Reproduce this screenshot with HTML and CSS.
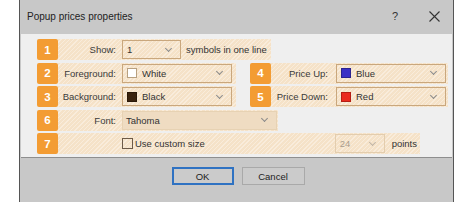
FILE: index.html
```html
<!DOCTYPE html>
<html lang="en">
<head>
  <meta charset="UTF-8">
  <title>Popup prices properties</title>
  <link rel="stylesheet" href="styles.css">
</head>
<body>
  <!-- Dialog Window -->
  <div class="window">
    <!-- Title Bar -->
    <div class="titlebar">
      <span class="title">Popup prices properties</span>
      <span class="help">?</span>
      <span class="close">
        <svg width="11" height="11" viewBox="0 0 11 11">
          <path d="M0.5 0.5 L10.5 10.5 M10.5 0.5 L0.5 10.5" stroke="#333" stroke-width="1.1" fill="none"/>
        </svg>
      </span>
    </div>

    <!-- Settings Panel -->
    <div class="panel">
      <div class="row">
        <div class="badge">1</div>
        <div class="strip">
          <span class="label">Show:</span>
          <div class="select show-select"><span class="value">1</span><span class="arrow"></span></div>
          <span class="note">symbols in one line</span>
        </div>
      </div>

      <div class="row">
        <div class="badge">2</div>
        <div class="strip">
          <span class="label">Foreground:</span>
          <div class="select color-select"><span class="swatch white"></span><span class="value">White</span><span class="arrow"></span></div>
        </div>
        <div class="badge right">4</div>
        <div class="strip right-strip">
          <span class="label">Price Up:</span>
          <div class="select color-select"><span class="swatch blue"></span><span class="value">Blue</span><span class="arrow"></span></div>
        </div>
      </div>

      <div class="row">
        <div class="badge">3</div>
        <div class="strip">
          <span class="label">Background:</span>
          <div class="select color-select"><span class="swatch black"></span><span class="value">Black</span><span class="arrow"></span></div>
        </div>
        <div class="badge right">5</div>
        <div class="strip right-strip">
          <span class="label">Price Down:</span>
          <div class="select color-select"><span class="swatch red"></span><span class="value">Red</span><span class="arrow"></span></div>
        </div>
      </div>

      <div class="row">
        <div class="badge">6</div>
        <div class="strip font-strip">
          <span class="label">Font:</span>
          <div class="select font-select"><span class="value">Tahoma</span><span class="arrow"></span></div>
        </div>
      </div>

      <div class="row">
        <div class="badge">7</div>
        <div class="strip size-strip">
          <span class="label"></span>
          <span class="checkbox"></span>
          <span class="check-text">Use custom size</span>
          <span class="spacer"></span>
          <div class="select size-select"><span class="value">24</span><span class="arrow"></span></div>
          <span class="note">points</span>
        </div>
      </div>
    </div>

    <!-- Buttons -->
    <div class="footer">
      <button class="btn ok">OK</button>
      <button class="btn">Cancel</button>
    </div>
  </div>
</body>
</html>
```

FILE: styles.css
```css
/* General Reset */
* {
  margin: 0;
  padding: 0;
  box-sizing: border-box;
  font-family: 'Liberation Sans', Arial, sans-serif;
}

body {
  background: #fff;
  color: #333;
  font-size: 9.5px;
}

/* Window */
.window {
  margin-left: 19px;
  width: 435px;
  height: 202px;
  background: #c8c8c8;
  border-left: 1px solid #555;
  border-right: 1px solid #555;
  padding: 0 1px;
}

/* Title Bar */
.titlebar {
  height: 34px;
  display: flex;
  align-items: center;
  padding-left: 6px;
  padding-bottom: 2px;
}

.title {
  font-size: 10px;
  color: #222;
  flex: 1;
}

.help {
  font-size: 11px;
  color: #333;
  width: 10px;
  margin-right: 27px;
}

.close {
  display: flex;
  margin-right: 12px;
}

/* Settings Panel */
.panel {
  background: #efefef;
  height: 124px;
  padding: 5px 0 0 16px;
  border-bottom: 1px solid #8e8e8e;
}

.row {
  display: flex;
  height: 21px;
  margin-bottom: 2.5px;
}

.badge {
  width: 21px;
  background: #f39c33;
  color: #fff;
  font-weight: bold;
  font-size: 11.5px;
  border-radius: 2px;
  display: flex;
  align-items: center;
  justify-content: center;
}

.badge.right {
  margin-left: 14px;
}

.strip {
  display: flex;
  align-items: center;
  padding-right: 4px;
  background: repeating-linear-gradient(135deg, #f5e2c8 0 2px, #f9ecdb 2px 3px);
}

.label {
  width: 58px;
  margin-right: 6px;
  text-align: right;
  color: #3a3a3a;
}

.right-strip {
  padding-right: 2px;
}

.right-strip .label {
  width: 57px;
  margin-right: 8px;
}

/* Select Boxes */
.select {
  height: 19px;
  border: 1px solid #c9a77d;
  display: flex;
  align-items: center;
  padding-left: 4px;
}

.select .value {
  flex: 1;
}

.arrow {
  width: 5px;
  height: 5px;
  border-right: 1px solid #8a8a8a;
  border-bottom: 1px solid #8a8a8a;
  transform: rotate(45deg);
  margin: 0 9px 3px 0;
}

.show-select {
  width: 59px;
}

.color-select {
  width: 110px;
}

.swatch {
  width: 10px;
  height: 10px;
  margin-right: 5px;
  border: 1px solid #b8a080;
}

.swatch.white { background: #fff; }
.swatch.black { background: #3a230f; border-color: #2a1808; }
.swatch.blue { background: #3b30c6; border-color: #2d248f; }
.swatch.red { background: #ea2a1e; border-color: #b51e14; }

.note {
  margin-left: 5px;
}

.font-strip {
  padding-right: 1px;
}

.font-select {
  width: 155px;
  background: #efdcc2;
  border-color: #e7d2b3;
  padding-left: 3px;
}

/* Custom Size Row */
.size-strip {
  width: 362px;
  padding-right: 3px;
}

.checkbox {
  width: 11px;
  height: 11px;
  border: 1px solid #6d5b48;
  margin-right: 2px;
}

.spacer {
  flex: 1;
}

.size-select {
  width: 50px;
  color: #a99c8b;
  border-color: #e3cdae;
}

.size-select .arrow {
  border-color: #c0b3a3;
}

.size-strip .note {
  margin-left: 7px;
}

/* Footer Buttons */
.footer {
  display: flex;
  justify-content: center;
  gap: 8px;
  padding-top: 9px;
  padding-left: 3px;
}

.btn {
  width: 63px;
  height: 18px;
  background: #cbcbcb;
  border: 1px solid #a9a9a9;
  font-size: 9.5px;
  color: #222;
}

.btn.ok {
  width: 62px;
  border: 2px solid #2f72c2;
}
```
